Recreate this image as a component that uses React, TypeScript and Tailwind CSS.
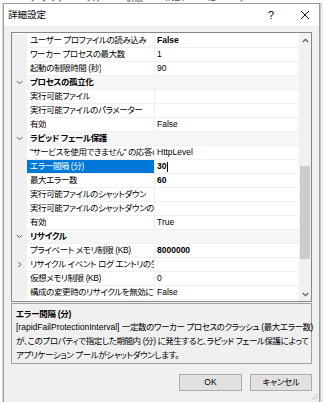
import React from 'react';

type Row = {
  name: string;
  value?: string;
  bold?: boolean;
  cat?: boolean;
  expander?: boolean;
  selected?: boolean;
};

const rows: Row[] = [
  { name: 'ユーザー プロファイルの読み込み', value: 'False', bold: true },
  { name: 'ワーカー プロセスの最大数', value: '1' },
  { name: '起動の制限時間 (秒)', value: '90' },
  { name: 'プロセスの孤立化', cat: true },
  { name: '実行可能ファイル' },
  { name: '実行可能ファイルのパラメーター' },
  { name: '有効', value: 'False' },
  { name: 'ラピッド フェール保護', cat: true },
  { name: '"サービスを使用できません" の応答の種類', value: 'HttpLevel' },
  { name: 'エラー間隔 (分)', value: '30', bold: true, selected: true },
  { name: '最大エラー数', value: '60', bold: true },
  { name: '実行可能ファイルのシャットダウン' },
  { name: '実行可能ファイルのシャットダウンのパラメーター' },
  { name: '有効', value: 'True' },
  { name: 'リサイクル', cat: true },
  { name: 'プライベート メモリ制限 (KB)', value: '8000000', bold: true },
  { name: 'リサイクル イベント ログ エントリの生成', expander: true },
  { name: '仮想メモリ制限 (KB)', value: '0' },
  { name: '構成の変更時のリサイクルを無効にする', value: 'False' },
];

const font = "font-['Liberation_Sans','Noto_Sans_CJK_JP',sans-serif] [font-feature-settings:'palt']";

function Chevron({ down }: { down: boolean }) {
  return (
    <svg width="7" height="7" viewBox="0 0 7 7" className="text-[#555]">
      {down ? (
        <path d="M1 2.2 L3.5 4.7 L6 2.2" fill="none" stroke="currentColor" strokeWidth="1" />
      ) : (
        <path d="M2.4 1 L4.9 3.5 L2.4 6" fill="none" stroke="currentColor" strokeWidth="1" />
      )}
    </svg>
  );
}

function GridRow({ row }: { row: Row }) {
  if (row.cat) {
    return (
      <div className="flex h-[14px] border-b border-[#f0f0f0] bg-[#f7f7f7]">
        <div className="w-[15px] shrink-0 flex items-center justify-center bg-[#f0f0f0]">
          <Chevron down />
        </div>
        <div className="pl-[3px] flex items-center text-[8.5px] tracking-[-0.4px] font-bold text-black leading-none whitespace-nowrap">
          {row.name}
        </div>
      </div>
    );
  }
  return (
    <div className="flex h-[14px] border-b border-[#f0f0f0]">
      <div className="w-[15px] shrink-0 flex items-center justify-center bg-[#f0f0f0]">
        {row.expander && <Chevron down={false} />}
      </div>
      <div
        className={
          'w-[128px] shrink-0 overflow-hidden whitespace-nowrap flex items-center pl-[3px] text-[8.5px] tracking-[-0.4px] leading-none border-r border-[#f0f0f0] ' +
          (row.selected ? 'bg-[#0078d7] text-white' : 'text-black')
        }
      >
        <span className="block overflow-hidden">{row.name}</span>
      </div>
      <div
        className={
          'flex-1 flex items-center pl-[2px] text-[8.5px] leading-none whitespace-nowrap text-black ' +
          (row.bold ? 'font-bold' : '')
        }
      >
        {row.value}
        {row.selected && <span className="ml-[1px] w-px h-[10px] bg-black" />}
      </div>
    </div>
  );
}

function Scrollbar() {
  return (
    <div className="w-[12px] shrink-0 bg-[#f0f0f0] flex flex-col">
      <div className="h-[14px] flex items-center justify-center">
        <svg width="7" height="5" viewBox="0 0 7 5">
          <path d="M0.8 4 L3.5 1.3 L6.2 4" fill="none" stroke="#606060" strokeWidth="1.2" />
        </svg>
      </div>
      <div className="h-[119px]" />
      <div className="h-[93px] mx-[1px] bg-[#cdcdcd]" />
      <div className="flex-1" />
      <div className="h-[14px] flex items-center justify-center">
        <svg width="7" height="5" viewBox="0 0 7 5">
          <path d="M0.8 1 L3.5 3.7 L6.2 1" fill="none" stroke="#606060" strokeWidth="1.2" />
        </svg>
      </div>
    </div>
  );
}

export default function App() {
  return (
    <div className={'w-[323px] h-[402px] overflow-hidden bg-[#fbfbfb] flex flex-col ' + font}>
      {/* window behind the dialog */}
      <div className="h-[3px] overflow-hidden shrink-0">
        <div className="flex gap-[22px] pl-[30px] -mt-[7px] text-[9px] leading-[10px] text-[#555] whitespace-nowrap">
          <span>ア プリケ</span>
          <span>ステ</span>
          <span>状態</span>
          <span>.NET</span>
          <span>ID</span>
          <span>ア</span>
        </div>
      </div>
      <div className="flex flex-1 min-h-0">
        <div className="w-[3px] shrink-0 border-r border-[#d8d8d8]" />
        <div className="w-[317px] shrink-0 flex flex-col border border-[#9a9a9a] border-b-0 bg-[#f0f0f0]">
          {/* title bar */}
          <div className="h-[22px] shrink-0 bg-white flex items-center">
            <span className="pl-[4px] text-[9.5px] text-black leading-none">詳細設定</span>
            <span className="ml-auto mr-[26px] text-[11px] text-black leading-none">?</span>
            <span className="mr-[9px] flex items-center">
              <svg width="10" height="10" viewBox="0 0 10 10">
                <path d="M1 1 L9 9 M9 1 L1 9" stroke="#111" strokeWidth="1" />
              </svg>
            </span>
          </div>

          <div className="flex-1 flex flex-col px-[7px] pt-[6px]">
            {/* property grid */}
            <div className="h-[270px] shrink-0 border border-[#828790] bg-white flex">
              <div className="flex-1 pt-[1px] overflow-hidden">
                {rows.map((r, i) => (
                  <GridRow key={i} row={r} />
                ))}
              </div>
              <Scrollbar />
            </div>

            {/* description */}
            <div className="mt-[1px] h-[61px] shrink-0 border border-[#a0a0a0] px-[4px] pt-[4px] text-[8.5px] text-black">
              <div className="font-bold leading-[12px] tracking-[-0.3px]">エラー間隔 (分)</div>
              <div className="leading-[14px] whitespace-nowrap">
                [rapidFailProtectionInterval]{' '}
                <span className="tracking-[-0.4px]">一定数のワーカー プロセスのクラッシュ (最大エラー数)</span>
              </div>
              <div className="leading-[14px] whitespace-nowrap tracking-[-0.4px]">
                が、このプロパティで指定した期間内 (分) に発生すると、ラピッド フェール保護によって
              </div>
              <div className="leading-[14px] whitespace-nowrap tracking-[-0.4px]">
                アプリケーション プールがシャットダウンします。
              </div>
            </div>

            {/* buttons */}
            <div className="flex justify-end gap-[8px] mt-[10px]">
              <button className="w-[63px] h-[17px] bg-[#e1e1e1] border border-[#adadad] text-[8.5px] text-black leading-none">
                OK
              </button>
              <button className="w-[62px] h-[17px] bg-[#e1e1e1] border border-[#adadad] text-[8.5px] tracking-[-0.3px] text-black leading-none">
                キャンセル
              </button>
            </div>
            <div className="flex-1 flex justify-end items-end pb-[2px] -mr-[6px]">
              <svg width="6" height="6" viewBox="0 0 6 6">
                <rect x="4" y="0" width="1" height="1" fill="#aaa" />
                <rect x="2" y="2" width="1" height="1" fill="#aaa" />
                <rect x="4" y="2" width="1" height="1" fill="#aaa" />
                <rect x="0" y="4" width="1" height="1" fill="#aaa" />
                <rect x="2" y="4" width="1" height="1" fill="#aaa" />
                <rect x="4" y="4" width="1" height="1" fill="#aaa" />
              </svg>
            </div>
          </div>
        </div>
        <div className="flex-1 border-l border-[#c8c8c8] bg-[#e8eef5]" />
      </div>
    </div>
  );
}
